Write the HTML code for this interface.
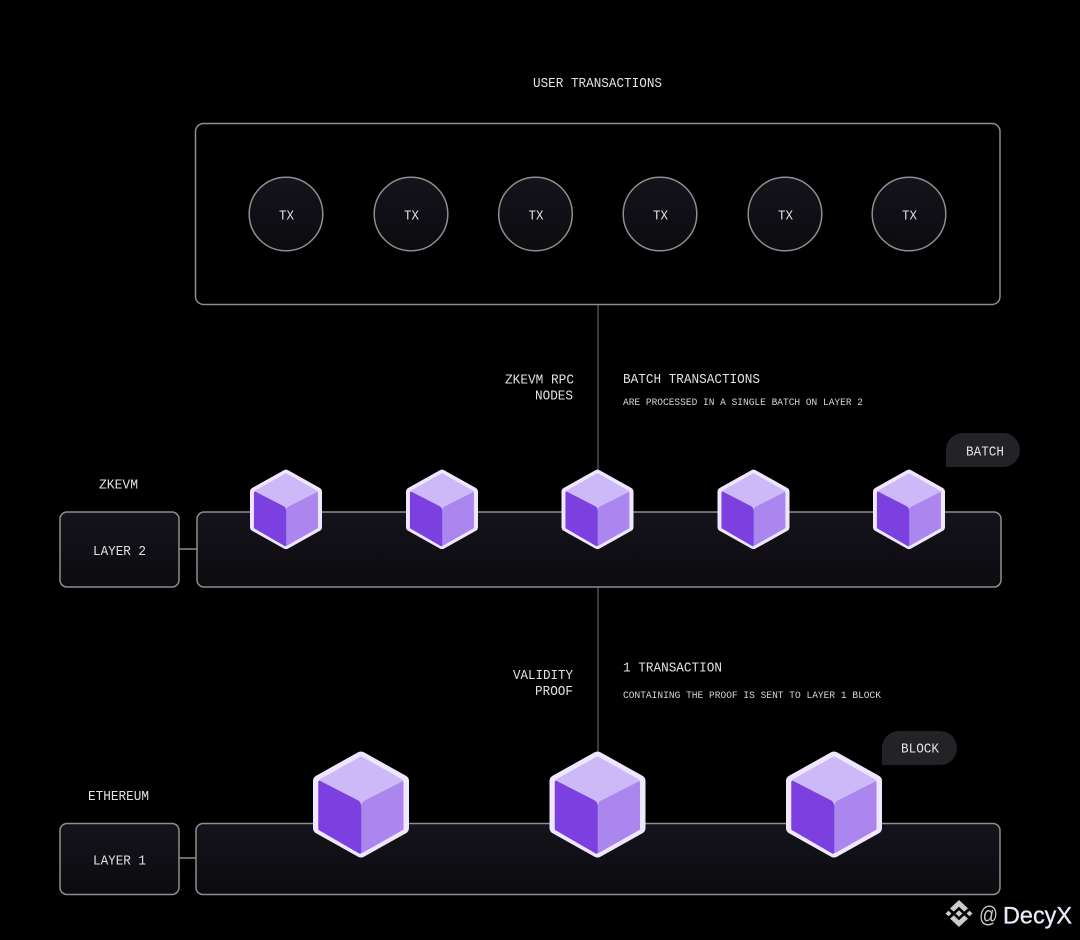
<!DOCTYPE html>
<html><head><meta charset="utf-8"><style>
html,body{margin:0;padding:0;background:#000;width:1080px;height:940px;overflow:hidden}
svg{display:block;filter:blur(.35px)}
text{font-family:"Liberation Mono",monospace;fill:#e2e2e2;font-size:14px}
.s{font-size:10.500px;fill:#d6d6d6}
.b{fill:url(#g);stroke:#8e8e8e;stroke-width:1.5}
</style></head><body>
<svg width="1080" height="940" viewBox="0 0 1080 940" xmlns="http://www.w3.org/2000/svg">
<defs>
<linearGradient id="g" x1="0" y1="0" x2="0" y2="1"><stop offset="0" stop-color="#15131b"/><stop offset="1" stop-color="#0c0b0f"/></linearGradient>
<g id="cube" stroke-linejoin="round">
<path d="M0-46.500 42-23V24L0 47.500-42 24V-23Z" fill="#efe7ff" stroke="#efe7ff" stroke-width="12"/>
<path d="M0-45 40-22.500V23.500L0 46-40 23.500V-22.500Z" fill="#cdb9f7" stroke="#cdb9f7" stroke-width="5"/>
<path d="M41.500-21.500 4-2.500Q1-1 1 3V48L41.500 25Z" fill="#aa86ee" stroke="#aa86ee" stroke-width="2"/>
<path d="M-41.500-22 -3.500-2.500Q-1-1 -1 3V48.500L-41.500 25Z" fill="#7c40e1" stroke="#7c40e1" stroke-width="2.500"/>
</g>
</defs>
<rect width="1080" height="940" fill="#000"/>
<path d="M598 304V472M598 587V754" stroke="#5a5a5a" stroke-width="1.3"/>
<rect x="195.500" y="123.500" width="804.500" height="181" rx="8" fill="#000" stroke="#8e8e8e" stroke-width="1.5"/>
<circle class="b" cx="286" cy="214" r="36.800"/><circle class="b" cx="411" cy="214" r="36.800"/><circle class="b" cx="535.500" cy="214" r="36.800"/><circle class="b" cx="660" cy="214" r="36.800"/><circle class="b" cx="785" cy="214" r="36.800"/><circle class="b" cx="909" cy="214" r="36.800"/>
<path d="M179 549H197M179 858H196" stroke="#8e8e8e" stroke-width="1.5"/>
<rect class="b" x="60" y="512" width="119" height="75" rx="7"/>
<rect class="b" x="197" y="512" width="804" height="75" rx="7"/>
<rect class="b" x="60" y="823.500" width="119" height="71" rx="7"/>
<rect class="b" x="196" y="823.500" width="804" height="71" rx="7"/>
<path d="M946 467V450A17 17 0 0 1 963 433H1003A17 17 0 0 1 1003 467Z" fill="#232227"/>
<path d="M882 765V748A17 17 0 0 1 899 731H940A17 17 0 0 1 940 765Z" fill="#232227"/>
<use href="#cube" transform="translate(286 509) scale(.75)"/>
<use href="#cube" transform="translate(442 509) scale(.75)"/>
<use href="#cube" transform="translate(597.500 509) scale(.75)"/>
<use href="#cube" transform="translate(753.500 509) scale(.75)"/>
<use href="#cube" transform="translate(909 509) scale(.75)"/>
<use href="#cube" transform="translate(361 804)"/>
<use href="#cube" transform="translate(597.500 804)"/>
<use href="#cube" transform="translate(834 804)"/>
<text x="533" y="87" textLength="129" lengthAdjust="spacingAndGlyphs">USER TRANSACTIONS</text>
<text x="279" y="219.500" textLength="15" lengthAdjust="spacingAndGlyphs">TX</text><text x="404" y="219.500" textLength="15" lengthAdjust="spacingAndGlyphs">TX</text><text x="528.500" y="219.500" textLength="15" lengthAdjust="spacingAndGlyphs">TX</text><text x="653" y="219.500" textLength="15" lengthAdjust="spacingAndGlyphs">TX</text><text x="778" y="219.500" textLength="15" lengthAdjust="spacingAndGlyphs">TX</text><text x="902" y="219.500" textLength="15" lengthAdjust="spacingAndGlyphs">TX</text>
<text x="505" y="383.500" textLength="69" lengthAdjust="spacingAndGlyphs">ZKEVM RPC</text>
<text x="535" y="399.500" textLength="38" lengthAdjust="spacingAndGlyphs">NODES</text>
<text x="623" y="383" textLength="137" lengthAdjust="spacingAndGlyphs">BATCH TRANSACTIONS</text>
<text class="s" x="623" y="405" textLength="240" lengthAdjust="spacingAndGlyphs">ARE PROCESSED IN A SINGLE BATCH ON LAYER 2</text>
<text x="99" y="488.500" textLength="39" lengthAdjust="spacingAndGlyphs">ZKEVM</text>
<text x="93" y="555" textLength="53" lengthAdjust="spacingAndGlyphs">LAYER 2</text>
<text x="966" y="455.500" textLength="38" lengthAdjust="spacingAndGlyphs">BATCH</text>
<text x="623" y="671.500" textLength="99" lengthAdjust="spacingAndGlyphs">1 TRANSACTION</text>
<text class="s" x="623" y="698" textLength="258" lengthAdjust="spacingAndGlyphs">CONTAINING THE PROOF IS SENT TO LAYER 1 BLOCK</text>
<text x="513" y="679" textLength="60" lengthAdjust="spacingAndGlyphs">VALIDITY</text>
<text x="535" y="695" textLength="38" lengthAdjust="spacingAndGlyphs">PROOF</text>
<text x="901" y="752.500" textLength="38" lengthAdjust="spacingAndGlyphs">BLOCK</text>
<text x="88" y="800" textLength="61" lengthAdjust="spacingAndGlyphs">ETHEREUM</text>
<text x="93" y="864.500" textLength="53" lengthAdjust="spacingAndGlyphs">LAYER 1</text>
<g fill="#cccccc" transform="translate(959 913.500) scale(1 .93)">
<path d="M0-14.500 9-5.500 5.200-2 0-7.200-5.200-2-9-5.500Z"/>
<path d="M0 14.500 9 5.500 5.200 2 0 7.200-5.200 2-9 5.500Z"/>
<path d="M0-3.500 3.500 0 0 3.500-3.500 0Z"/>
<path d="M-10.500-3 -7.500 0-10.500 3-13.500 0Z"/>
<path d="M10.500-3 13.500 0 10.500 3 7.500 0Z"/>
</g>
<text x="979" y="922.500" style="font-family:'Liberation Sans',sans-serif;font-size:23px;fill:#c8c8c8" textLength="19" lengthAdjust="spacingAndGlyphs">@</text>
<text x="1003" y="923.500" style="font-family:'Liberation Sans',sans-serif;font-size:24px;fill:#eee8fb;stroke:#eee8fb;stroke-width:.3" textLength="69" lengthAdjust="spacingAndGlyphs">DecyX</text>
</svg>
</body></html>
